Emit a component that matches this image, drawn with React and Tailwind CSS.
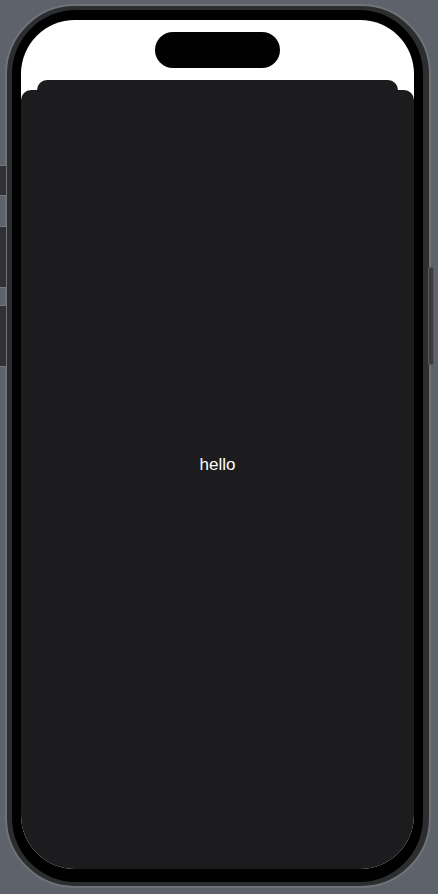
export default function App() {
  return (
    <div className="relative w-[438px] h-[894px] overflow-hidden bg-[#5e626a] pt-[4px] pl-[5px]" style={{ fontFamily: '"Liberation Sans", Arial, sans-serif' }}>
      {/* left side buttons */}
      <div className="absolute left-0 top-[165px] w-[6px] h-[31px] bg-[#313133] border-y border-[#75787e]" />
      <div className="absolute left-0 top-[226px] w-[6px] h-[62px] bg-[#313133] border-y border-[#75787e]" />
      <div className="absolute left-0 top-[305px] w-[6px] h-[62px] bg-[#313133] border-y border-[#75787e]" />
      {/* right side button */}
      <div className="absolute left-[428px] top-[267px] w-[6px] h-[98px] bg-[#3a3b3e] border border-[#55585d] rounded-[1px] z-10" />

      {/* phone frame */}
      <div className="w-[426px] h-[884px] rounded-[70px] bg-[#2c2d2f] border-[2px] border-[#6f7277] pl-[5px] pr-[6px] pt-[4px] pb-[4px] flex">
        {/* black bezel */}
        <div className="flex-1 rounded-[64px] bg-black pl-[9px] pr-[9px] pt-[10px] pb-[13px] flex">
          {/* screen */}
          <div className="flex-1 rounded-[54px] bg-white overflow-hidden flex flex-col">
            <div className="mt-[12px] mx-auto w-[125px] h-[36px] rounded-full bg-black shrink-0" />
            <div className="mt-[12px] ml-[16px] w-[361px] h-[20px] rounded-t-[10px] bg-[#1c1c1e] shrink-0" />
            <div className="-mt-[10px] flex-1 rounded-t-[10px] bg-[#1c1c1e] flex flex-col items-center pt-[365px]">
              <span className="text-white text-[17px] leading-[20px]">hello</span>
            </div>
          </div>
        </div>
      </div>
    </div>
  );
}
